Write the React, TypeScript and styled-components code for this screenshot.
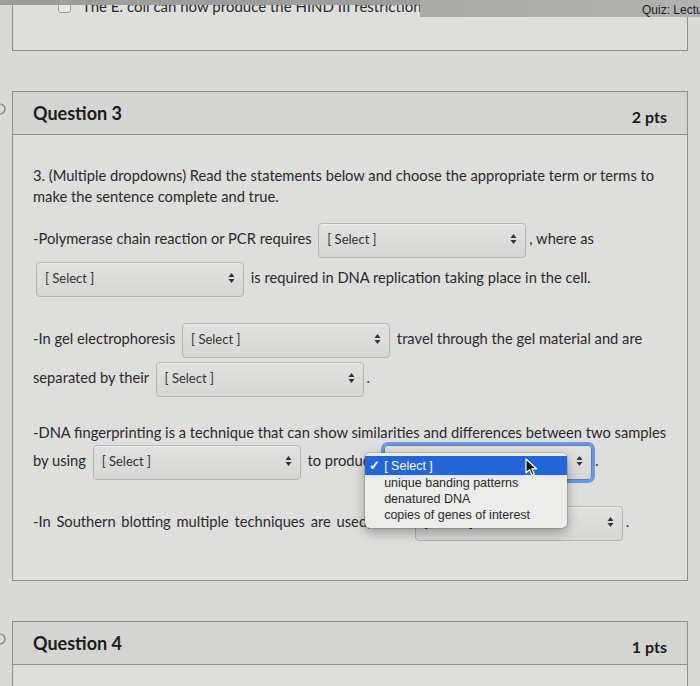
import React from "react";
import styled, { createGlobalStyle } from "styled-components";

const GlobalStyle = createGlobalStyle`
  html, body {
    margin: 0;
    padding: 0;
  }
  body {
    background: #d9d9d7;
    font-family: Lato, "Noto Sans", "Liberation Sans", sans-serif;
    color: #2a2a2a;
    overflow: hidden;
  }
`;

const TitleBar = styled.div`
  position: fixed;
  top: 0;
  left: 0;
  right: 0;
  display: flex;
  align-items: flex-start;
  z-index: 10;
`;

const TitleShade = styled.div`
  width: 420px;
  height: 5px;
  background: #9d9d9b;
`;

const TitleTab = styled.div`
  flex: 1;
  height: 17px;
  padding-left: 222px;
  background: linear-gradient(90deg, #a9a9a7, #b1b1af);
  white-space: nowrap;
  overflow: hidden;
  font-family: "Liberation Sans", Arial, sans-serif;
  font-size: 12px;
  line-height: 20px;
  color: #1e1e1e;
`;

const Page = styled.main`
  display: flex;
  flex-direction: column;
  gap: 40px;
`;

const Block = styled.section<{ $first?: boolean }>`
  display: flex;
  margin-top: ${(p) => (p.$first ? "-24px" : "0")};
`;

const Gutter = styled.div`
  width: 12px;
  flex: none;
  padding-top: 8px;
`;

const Card = styled.div`
  flex: 1;
  margin-right: 12px;
  border: 1px solid #8e8e8c;
  background: #dededc;
`;

const CardHeader = styled.div`
  display: flex;
  justify-content: space-between;
  align-items: center;
  height: 42px;
  padding: 0 20px;
  background: #d4d4d2;
  border-bottom: 1px solid #8e8e8c;
`;

const QuestionName = styled.h3`
  margin: 0;
  font-size: 18px;
  font-weight: 700;
  color: #1c1c1c;
`;

const Points = styled.span`
  font-size: 16px;
  font-weight: 700;
  color: #1c1c1c;
  padding-top: 6px;
`;

const CardBody = styled.div<{ $short?: boolean }>`
  padding: ${(p) => (p.$short ? "20px 20px 35px 20px" : "30px 10px 37px 20px")};
  font-size: 14.7px;
  line-height: 21px;
`;

const AnswerRow = styled.div`
  display: flex;
  align-items: center;
  gap: 11px;
  padding-left: 25px;
  line-height: 18px;
  font-size: 15px;
`;

const Checkbox = styled.span`
  width: 11px;
  height: 11px;
  border: 1px solid #9a9a98;
  border-radius: 3px;
  background: #e8e8e6;
`;

const Prompt = styled.p`
  margin: 0 0 14px;
`;

const Statement = styled.p<{ $spread?: boolean }>`
  margin: 0 0 22px;
  line-height: 22px;
  word-spacing: ${(p) => (p.$spread ? "2px" : "normal")};
  &:last-child {
    margin-bottom: 0;
  }
`;

const SelectBox = styled.span<{ $focused?: boolean }>`
  position: relative;
  display: inline-flex;
  vertical-align: middle;
  align-items: center;
  justify-content: space-between;
  box-sizing: border-box;
  width: 208px;
  height: 35px;
  margin: 2px 3px;
  padding: 0 8px 3px 8px;
  border: 1px solid ${(p) => (p.$focused ? "#4f7fcf" : "#b4b4b2")};
  border-radius: 4px;
  background: linear-gradient(#e1e1df, #d6d6d4);
  box-shadow: ${(p) =>
    p.$focused ? "0 0 0 3px #6e98d8" : "inset 0 1px 0 rgba(255,255,255,0.45)"};
  font-size: 13px;
  line-height: 16px;
  color: #333;
  word-spacing: normal;
`;

const Popup = styled.div`
  position: absolute;
  left: -20px;
  top: 7px;
  width: 202px;
  padding: 3px 0 5px;
  background: #ececeb;
  border-radius: 5px;
  box-shadow: 0 4px 12px rgba(0, 0, 0, 0.35), 0 0 0 1px rgba(0, 0, 0, 0.12);
  font-family: "Liberation Sans", Arial, sans-serif;
  font-size: 12.5px;
  z-index: 5;
`;

const Option = styled.div<{ $active?: boolean }>`
  display: flex;
  align-items: center;
  height: ${(p) => (p.$active ? "19px" : "16px")};
  padding-left: 4px;
  color: ${(p) => (p.$active ? "#fff" : "#2a2a2a")};
  background: ${(p) => (p.$active ? "#2466d8" : "transparent")};
`;

const Check = styled.span`
  width: 15px;
  font-size: 13px;
  font-weight: 700;
`;

const Cursor = styled.svg`
  position: absolute;
  left: 160px;
  top: 5px;
`;

function Arrows() {
  return (
    <svg width="7" height="12" viewBox="0 0 7 12">
      <path d="M3.5 1 L6.5 5 H0.5 Z M3.5 11 L0.5 7 H6.5 Z" fill="#333" />
    </svg>
  );
}

function Select({ open = false }: { open?: boolean }) {
  return (
    <SelectBox $focused={open}>
      <span>[ Select ]</span>
      <Arrows />
      {open && (
        <Popup>
          <Option $active>
            <Check>✓</Check>[ Select ]
          </Option>
          <Option>
            <Check />
            unique banding patterns
          </Option>
          <Option>
            <Check />
            denatured DNA
          </Option>
          <Option>
            <Check />
            copies of genes of interest
          </Option>
          <Cursor width="13" height="19" viewBox="0 0 13 19">
            <path
              d="M1 1 L1 15 L4.5 11.6 L7 17.2 L9.2 16.2 L6.8 10.8 L11.5 10.8 Z"
              fill="#111"
              stroke="#fff"
              strokeWidth="1.2"
              strokeLinejoin="round"
            />
          </Cursor>
        </Popup>
      )}
    </SelectBox>
  );
}

function Flag() {
  return (
    <svg width="6" height="12" viewBox="0 0 6 12">
      <path d="M0 1 A5 5 0 0 1 0 11" fill="none" stroke="#7a7a78" strokeWidth="1.2" />
    </svg>
  );
}

export default function App() {
  return (
    <>
      <GlobalStyle />
      <TitleBar>
        <TitleShade />
        <TitleTab>Quiz: Lecture 9 Review</TitleTab>
      </TitleBar>
      <Page>
        <Block $first>
          <Gutter />
          <Card>
            <CardBody $short>
              <AnswerRow>
                <Checkbox />
                The E. coli can now produce the HIND III restriction enzyme.
              </AnswerRow>
            </CardBody>
          </Card>
        </Block>

        <Block>
          <Gutter>
            <Flag />
          </Gutter>
          <Card>
            <CardHeader>
              <QuestionName>Question 3</QuestionName>
              <Points>2 pts</Points>
            </CardHeader>
            <CardBody>
              <Prompt>
                3. (Multiple dropdowns) Read the statements below and choose the
                appropriate term or terms to make the sentence complete and true.
              </Prompt>
              <Statement>
                -Polymerase chain reaction or PCR requires <Select />, where as{" "}
                <Select /> is required in DNA replication taking place in the cell.
              </Statement>
              <Statement>
                -In gel electrophoresis <Select /> travel through the gel material
                and are separated by their <Select />.
              </Statement>
              <Statement>
                -DNA fingerprinting is a technique that can show similarities and
                differences between two samples by using <Select /> to produce{" "}
                <Select open />.
              </Statement>
              <Statement $spread>
                -In Southern blotting multiple techniques are used, such{" "}
                <Select />.
              </Statement>
            </CardBody>
          </Card>
        </Block>

        <Block>
          <Gutter>
            <Flag />
          </Gutter>
          <Card>
            <CardHeader>
              <QuestionName>Question 4</QuestionName>
              <Points>1 pts</Points>
            </CardHeader>
            <CardBody>
              <Prompt>&nbsp;</Prompt>
            </CardBody>
          </Card>
        </Block>
      </Page>
    </>
  );
}
